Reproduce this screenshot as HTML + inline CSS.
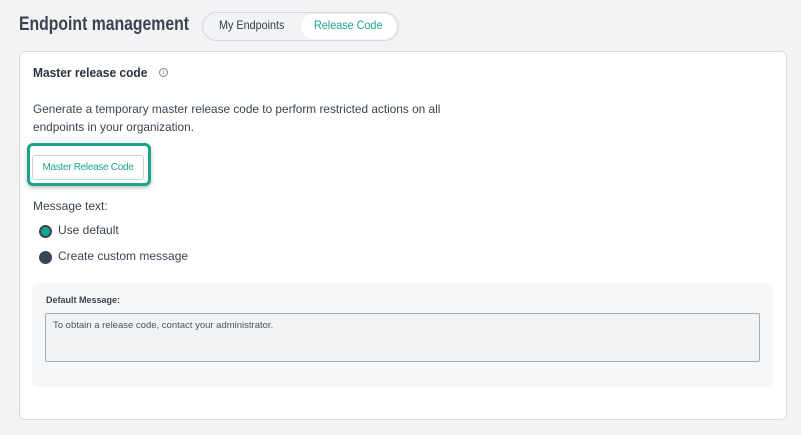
<!DOCTYPE html>
<html><head><style>
*{box-sizing:border-box;margin:0;padding:0}
body{width:801px;height:435px;background:#f2f3f5;font-family:"Liberation Sans",sans-serif;color:#2f3a45;position:relative;overflow:hidden}
.abs{position:absolute;white-space:nowrap}
</style></head><body>
<div class="abs" style="left:19px;top:14px;font-size:19px;font-weight:bold;color:#3a4450;transform:scaleX(0.83);transform-origin:left">Endpoint management</div>
<div class="abs" style="left:202px;top:12px;width:197px;height:29px;border:1px solid #d3d7dc;border-radius:15px;background:#f2f3f5"></div>
<div class="abs" style="left:301px;top:14px;width:95px;height:25px;border-radius:13px;background:#fff"></div>
<div class="abs" style="left:219px;top:18px;font-size:12px;color:#333c47;transform:scaleX(0.9);transform-origin:left">My Endpoints</div>
<div class="abs" style="left:314px;top:18px;font-size:12px;color:#1aa58f;transform:scaleX(0.9);transform-origin:left">Release Code</div>
<div class="abs" style="left:19px;top:51px;width:768px;height:369px;background:#fff;border:1px solid #d8dbdf;border-radius:6px"></div>
<div class="abs" style="left:33px;top:65px;font-size:13px;font-weight:bold;color:#2a333d;transform:scaleX(0.92);transform-origin:left">Master release code</div>
<div class="abs" style="left:159px;top:68px;width:9px;height:9px;border:1px solid #7a838d;border-radius:50%;font-size:7px;line-height:7px;text-align:center;color:#7a838d">i</div>
<div class="abs" style="left:33px;top:100px;font-size:12px;line-height:18px;color:#3a4450;transform:scaleX(0.985);transform-origin:left">Generate a temporary master release code to perform restricted actions on all<br>endpoints in your organization.</div>
<div class="abs" style="left:27px;top:143px;width:124px;height:43px;border:3px solid #1ba38d;border-radius:6px;box-shadow:0 2px 4px rgba(0,0,0,.25)"></div>
<div class="abs" style="left:32px;top:155px;width:112px;height:25px;border:1px solid #c8ced4;border-radius:3px;background:#fff;font-size:10px;color:#1aa58f;text-align:center;line-height:23px;letter-spacing:-0.3px">Master Release Code</div>
<div class="abs" style="left:33px;top:199px;font-size:12px;color:#3a4450">Message text:</div>
<div class="abs" style="left:39px;top:225px;width:13px;height:13px;border-radius:50%;background:#1aa58f;border:2px solid #384554"></div>
<div class="abs" style="left:58px;top:223px;font-size:12px;color:#3a4450">Use default</div>
<div class="abs" style="left:39px;top:251px;width:13px;height:13px;border-radius:50%;background:#3a4656"></div>
<div class="abs" style="left:58px;top:249px;font-size:12px;color:#3a4450">Create custom message</div>
<div class="abs" style="left:32px;top:283px;width:741px;height:104px;background:#f6f7f9;border-radius:5px"></div>
<div class="abs" style="left:46px;top:295px;font-size:9px;font-weight:bold;color:#3a4450">Default Message:</div>
<div class="abs" style="left:45px;top:313px;width:715px;height:49px;border:1px solid #a5adb6;border-radius:2px;background:#f2f3f5"></div>
<div class="abs" style="left:53px;top:320px;font-size:9.5px;color:#4a5460">To obtain a release code, contact your administrator.</div>
</body></html>
